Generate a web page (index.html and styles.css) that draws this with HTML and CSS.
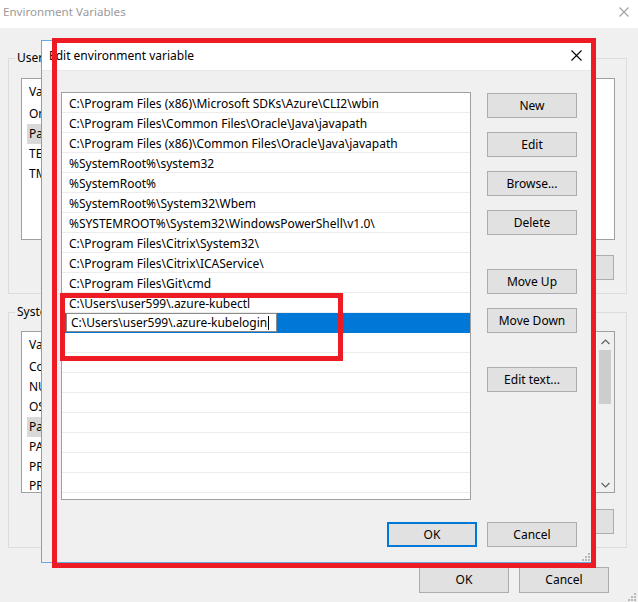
FILE: index.html
```html
<!DOCTYPE html>
<html>
<head>
<meta charset="utf-8">
<title>Environment Variables</title>
<link rel="stylesheet" href="styles.css">
</head>
<body>
<div class="win">
  <div class="titlebar">
    <span class="title">Environment Variables</span>
    <svg class="x-icon gray" width="10" height="10" viewBox="0 0 10 10"><path d="M0.5 0.5 L9.5 9.5 M9.5 0.5 L0.5 9.5"/></svg>
  </div>
  <div class="winbody">
    <fieldset class="group">
      <legend>User variables for user599</legend>
      <div class="listview user-lv">
        <div class="lv-main">
          <div class="lv-head"><span class="col1">Variable</span><span>Value</span></div>
          <div class="lv-row"><span>OneDrive</span></div>
          <div class="lv-row sel"><span>Path</span></div>
          <div class="lv-row"><span>TEMP</span></div>
          <div class="lv-row"><span>TMP</span></div>
        </div>
      </div>
      <div class="btnrow">
        <button class="btn">New...</button>
        <button class="btn">Edit...</button>
        <button class="btn">Delete</button>
      </div>
    </fieldset>
    <fieldset class="group sys">
      <legend>System variables</legend>
      <div class="listview">
        <div class="lv-main">
          <div class="lv-head"><span class="col1">Variable</span><span>Value</span></div>
          <div class="lv-row"><span>ComSpec</span></div>
          <div class="lv-row"><span>NUMBER_OF_PROCESSORS</span></div>
          <div class="lv-row"><span>OS</span></div>
          <div class="lv-row sel"><span>Path</span></div>
          <div class="lv-row"><span>PATHEXT</span></div>
          <div class="lv-row"><span>PROCESSOR_ARCHITECTURE</span></div>
          <div class="lv-row last"><span>PROCESSOR_IDENTIFIER</span></div>
        </div>
        <div class="vscroll">
          <div class="arrow"><svg width="9" height="6" viewBox="0 0 9 6"><path d="M0.5 5 L4.5 1 L8.5 5"/></svg></div>
          <div class="thumb"></div>
          <div class="track"></div>
          <div class="arrow"><svg width="9" height="6" viewBox="0 0 9 6"><path d="M0.5 1 L4.5 5 L8.5 1"/></svg></div>
        </div>
      </div>
      <div class="btnrow">
        <button class="btn">New...</button>
        <button class="btn">Edit...</button>
        <button class="btn">Delete</button>
      </div>
    </fieldset>
    <div class="footer">
      <button class="btn">OK</button>
      <button class="btn">Cancel</button>
    </div>
  </div>
  <svg class="grip outer-grip" width="8" height="8" viewBox="0 0 8 8"><rect x="6" y="0" width="2" height="2"/><rect x="3" y="3" width="2" height="2"/><rect x="6" y="3" width="2" height="2"/><rect x="0" y="6" width="2" height="2"/><rect x="3" y="6" width="2" height="2"/><rect x="6" y="6" width="2" height="2"/></svg>

  <div class="dlg">
    <div class="dlg-title">
      <span>Edit environment variable</span>
      <svg class="x-icon" width="11" height="11" viewBox="0 0 11 11"><path d="M0.5 0.5 L10.5 10.5 M10.5 0.5 L0.5 10.5"/></svg>
    </div>
    <div class="dlg-body">
      <div class="pathlist">
        <div class="prow">C:\Program Files (x86)\Microsoft SDKs\Azure\CLI2\wbin</div>
        <div class="prow">C:\Program Files\Common Files\Oracle\Java\javapath</div>
        <div class="prow">C:\Program Files (x86)\Common Files\Oracle\Java\javapath</div>
        <div class="prow">%SystemRoot%\system32</div>
        <div class="prow">%SystemRoot%</div>
        <div class="prow">%SystemRoot%\System32\Wbem</div>
        <div class="prow">%SYSTEMROOT%\System32\WindowsPowerShell\v1.0\</div>
        <div class="prow">C:\Program Files\Citrix\System32\</div>
        <div class="prow">C:\Program Files\Citrix\ICAService\</div>
        <div class="prow">C:\Program Files\Git\cmd</div>
        <div class="prow">C:\Users\user599\.azure-kubectl</div>
        <div class="prow editing"><div class="editbox">C:\Users\user599\.azure-kubelogin<span class="caret"></span></div></div>
        <div class="prow"></div>
        <div class="prow"></div>
        <div class="prow"></div>
        <div class="prow"></div>
        <div class="prow"></div>
        <div class="prow"></div>
        <div class="prow"></div>
        <div class="prow"></div>
        <div class="prow"></div>
      </div>
      <div class="sidebtns">
        <button class="btn">New</button>
        <button class="btn">Edit</button>
        <button class="btn">Browse...</button>
        <button class="btn">Delete</button>
        <button class="btn gap-before">Move Up</button>
        <button class="btn">Move Down</button>
        <button class="btn gap-before">Edit text...</button>
      </div>
      <div class="dlg-foot">
        <button class="btn default">OK</button>
        <button class="btn">Cancel</button>
      </div>
    </div>
    <svg class="grip inner-grip" width="8" height="8" viewBox="0 0 8 8"><rect x="6" y="0" width="2" height="2"/><rect x="3" y="3" width="2" height="2"/><rect x="6" y="3" width="2" height="2"/><rect x="0" y="6" width="2" height="2"/><rect x="3" y="6" width="2" height="2"/><rect x="6" y="6" width="2" height="2"/></svg>
  </div>

  <div class="mark mark-outer"></div>
  <div class="mark mark-inner"></div>
</div>
</body>
</html>
```
FILE: styles.css
```css
* { box-sizing: border-box; }

body {
  margin: 0;
  width: 638px;
  height: 602px;
  overflow: hidden;
  background: #f0f0f0;
  font-family: "Noto Sans", "DejaVu Sans", sans-serif;
  font-size: 12px;
  color: #000;
}

.win {
  position: relative;
  width: 638px;
  height: 602px;
}

.titlebar {
  height: 28px;
  background: #fff;
  display: flex;
  align-items: flex-start;
  justify-content: space-between;
  padding: 3px 9px 0 3px;
}

.title {
  color: #9a9a9a;
  font-size: 11.6px;
  line-height: 18px;
}

.x-icon path {
  stroke: #000;
  stroke-width: 1.1;
  fill: none;
}
.x-icon.gray { margin-top: 4px; }
.x-icon.gray path { stroke: #a0a0a0; }

.winbody {
  padding: 22px 11px 0 8px;
}

.group {
  margin: 0;
  padding: 0 11px 13px 12px;
  border: 1px solid #dcdcdc;
  min-width: 0;
}

.group.sys { margin-top: 10px; }

.group legend {
  padding: 0 2px;
  margin-left: -6px;
  line-height: 16px;
  height: 16px;
}

.listview {
  margin-top: 12px;
  height: 162px;
  border: 1px solid #a0a0a0;
  background: #fff;
  display: flex;
  overflow: hidden;
}

.sys .listview { margin-top: 11px; }

.lv-main { flex: 1; min-width: 0; }

.lv-head {
  height: 25px;
  display: flex;
  align-items: center;
  padding-left: 7px;
  white-space: nowrap;
}

.lv-head .col1 { width: 150px; }

.lv-row {
  height: 20px;
  line-height: 20px;
  padding-left: 5px;
  white-space: nowrap;
}

.lv-row.last { height: 15px; line-height: 18px; }

.lv-row span { padding: 0 2px; display: inline-block; }
.lv-row.sel span { background: #d9d9d9; width: 140px; }

.vscroll {
  width: 17px;
  background: #f0f0f0;
  display: flex;
  flex-direction: column;
}

.vscroll .arrow {
  height: 17px;
  display: flex;
  align-items: center;
  justify-content: center;
  padding-top: 2px;
}

.vscroll .arrow path {
  stroke: #606060;
  stroke-width: 1.2;
  fill: none;
}

.vscroll .thumb {
  margin: 1px 3px 0 2px;
  height: 54px;
  background: #cdcdcd;
}

.vscroll .track { flex: 1; }

.btnrow {
  margin-top: 15px;
  display: flex;
  justify-content: flex-end;
  gap: 10px;
  padding-right: 1px;
}

.sys .btnrow { margin-top: 16px; }

.btn {
  width: 90px;
  height: 25px;
  padding: 0;
  background: #e1e1e1;
  border: 1px solid #adadad;
  font-family: inherit;
  font-size: 12px;
  color: #000;
  line-height: 1;
}

.btn.default {
  border: 2px solid #0078d7;
}

.footer {
  margin-top: 19px;
  display: flex;
  justify-content: flex-end;
  gap: 10px;
  padding-right: 18px;
}

.footer .btn { height: 26px; }

.grip rect { fill: #b8b8b8; }

.outer-grip {
  position: absolute;
  right: 2px;
  bottom: 1px;
}

/* Edit dialog (a window over the other window) */
.dlg {
  position: absolute;
  left: 41px;
  top: 40px;
  width: 551px;
  height: 523px;
  border: 1px solid #6aa6e0;
  background: #f0f0f0;
}

.dlg-title {
  height: 30px;
  background: #fff;
  display: flex;
  align-items: center;
  justify-content: space-between;
  padding: 0 9px 0 7px;
  border-bottom: 1px solid #e8e8e8;
}

.dlg-body {
  padding: 21px 14px 0 19px;
  display: grid;
  grid-template-columns: 410px 90px;
  column-gap: 16px;
}

.pathlist {
  height: 408px;
  border: 1px solid #a0a0a0;
  background: #fff;
  overflow: hidden;
}

.prow {
  height: 20px;
  border-bottom: 1px solid #ececec;
  padding-left: 7px;
  line-height: 21px;
  white-space: nowrap;
}

.prow.editing {
  background: #0078d7;
  border-bottom-color: #0078d7;
  padding-left: 4px;
}

.editbox {
  width: 211px;
  height: 19px;
  background: #fff;
  border: 1px solid #8a8a8a;
  padding-left: 4px;
  line-height: 18px;
  white-space: nowrap;
}

.caret {
  display: inline-block;
  width: 1px;
  height: 14px;
  background: #000;
  vertical-align: -3px;
  margin-left: 1px;
}

.sidebtns {
  padding-top: 1px;
  display: flex;
  flex-direction: column;
  gap: 14px;
}

.sidebtns .gap-before { margin-top: 20px; }

.dlg-foot {
  grid-column: 1 / -1;
  margin-top: 22px;
  display: flex;
  justify-content: flex-end;
  gap: 10px;
}

.inner-grip {
  position: absolute;
  right: 1px;
  bottom: 1px;
}

/* red annotation rectangles drawn over the screenshot */
.mark {
  position: absolute;
  border: 5px solid #ed1c24;
  pointer-events: none;
}

.mark-outer {
  left: 52px;
  top: 38px;
  width: 544px;
  height: 530px;
}

.mark-inner {
  left: 60px;
  top: 293px;
  width: 283px;
  height: 68px;
}
```
